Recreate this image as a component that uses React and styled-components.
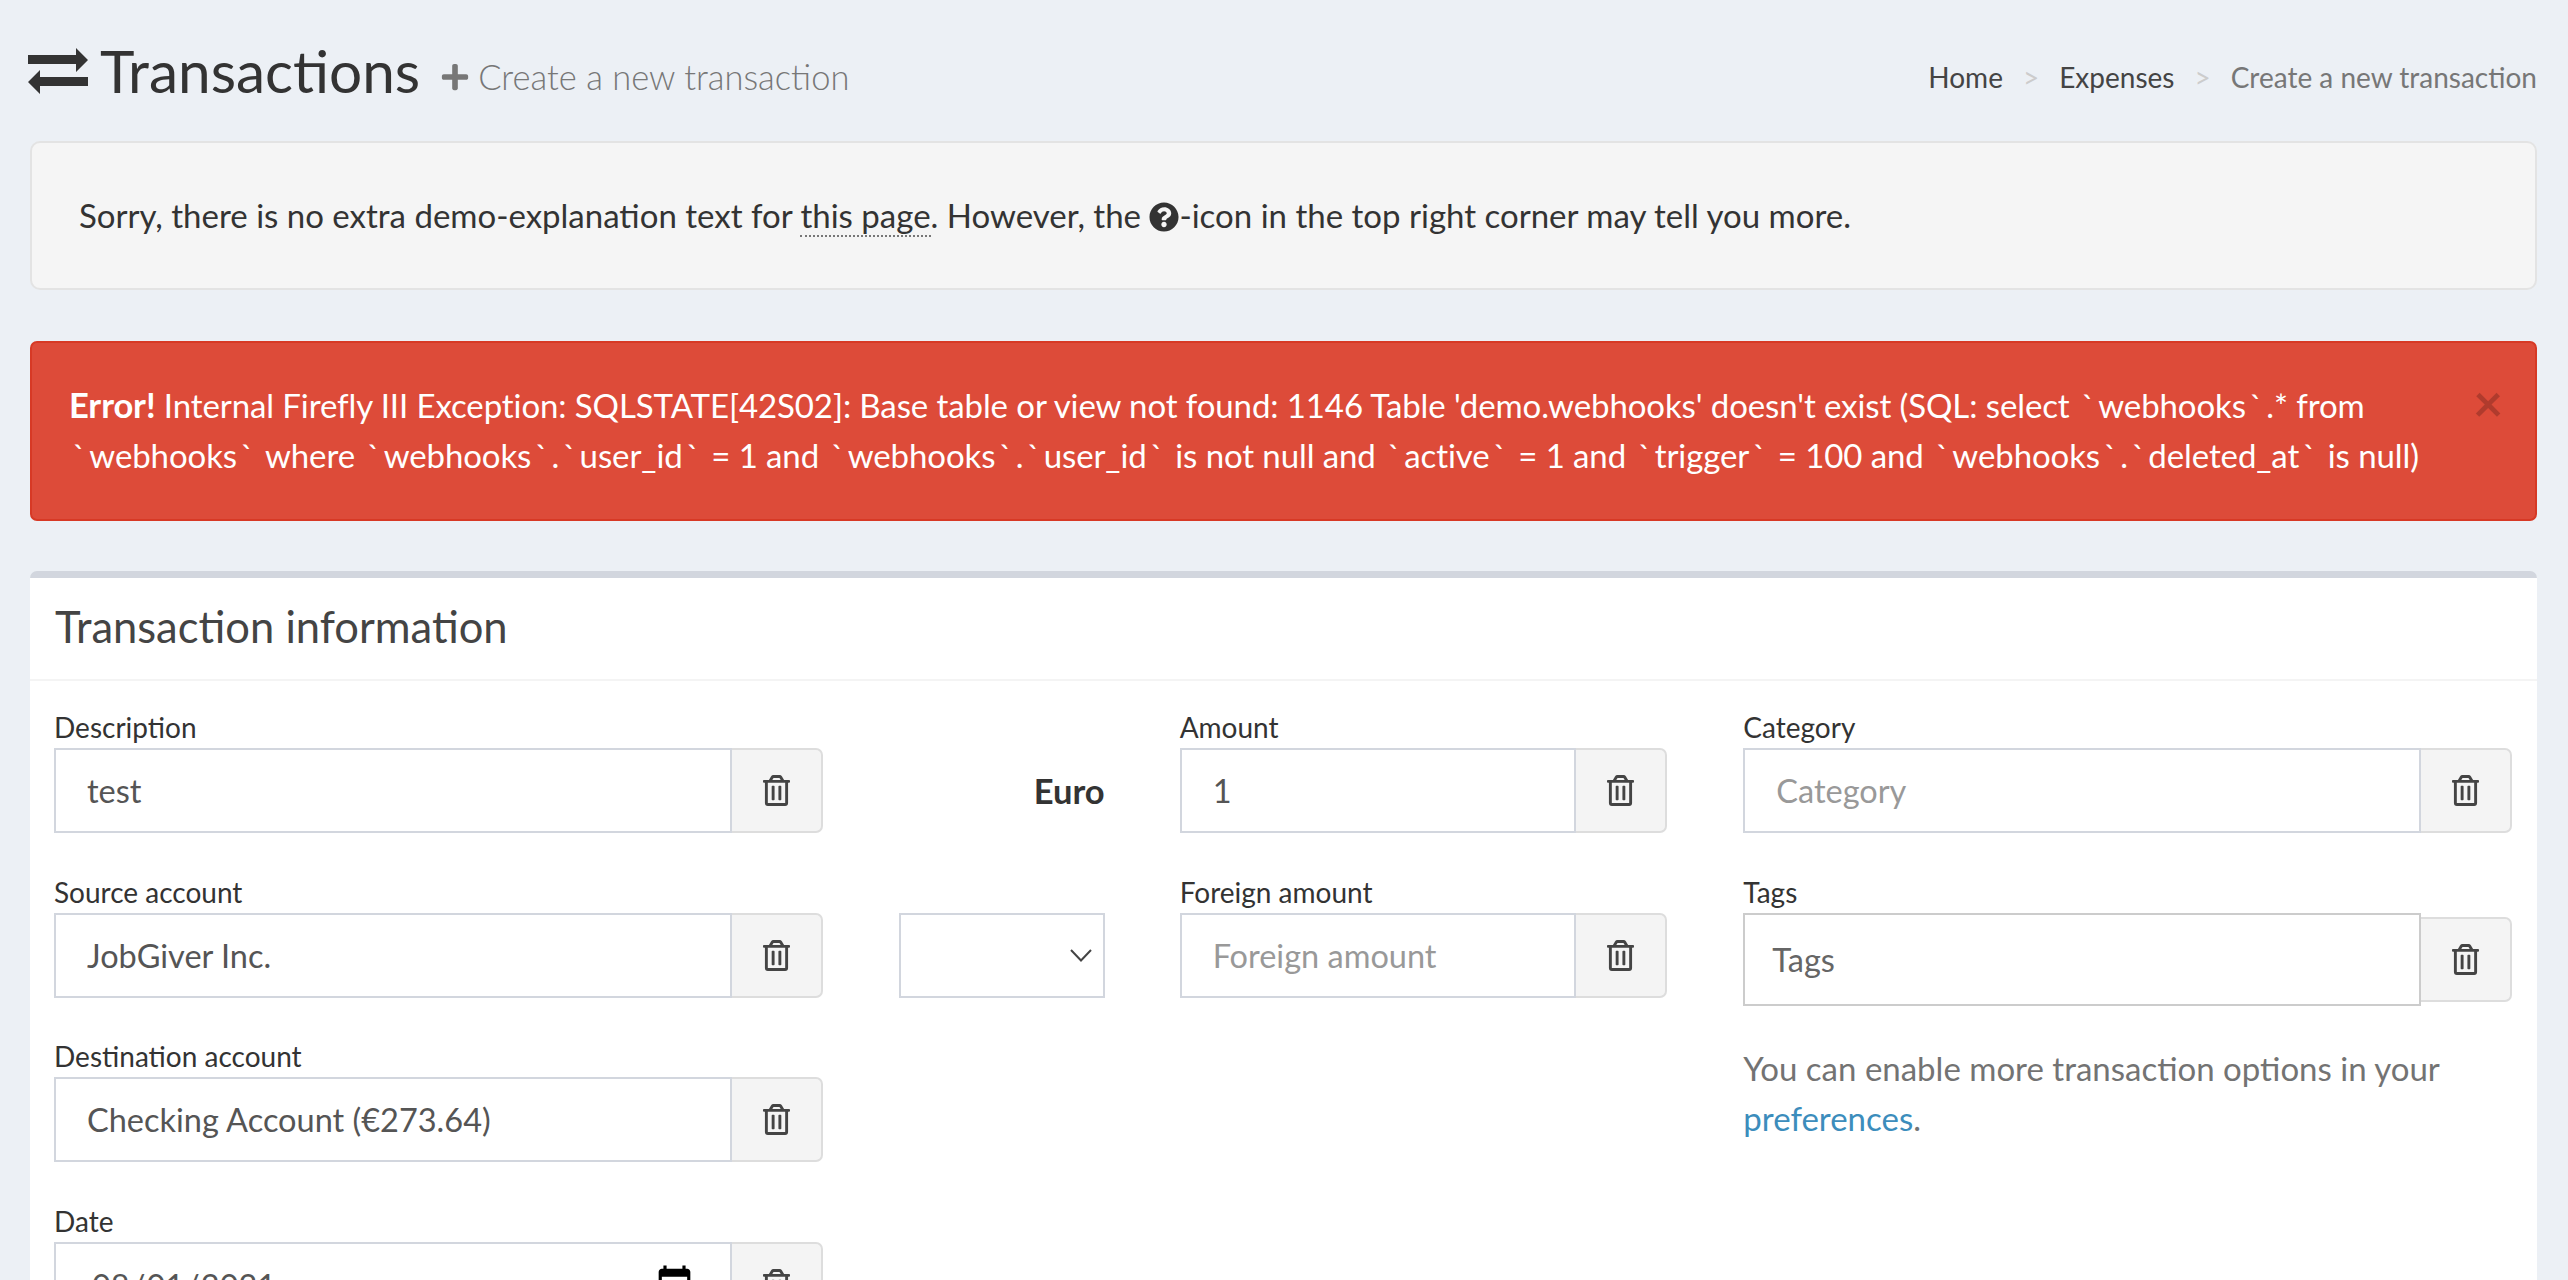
import React from 'react';
import styled, { createGlobalStyle } from 'styled-components';
import { FaPlus, FaQuestionCircle, FaRegTrashAlt } from 'react-icons/fa';

const GlobalStyle = createGlobalStyle`
html, body {
    margin: 0;
    height: 1280px;
    overflow: hidden;
    background: #ecf0f5;
}
body {
    font-family: "Lato", "Open Sans", sans-serif;
    font-size: 33px;
    line-height: 50px;
    color: #333;
}
`;

const Page = styled.div`
padding: 0 31px 0 30px;
`;

const Header = styled.header`
display: flex;
justify-content: space-between;
height: 141px;
padding-top: 35px;
box-sizing: border-box;
`;

const Title = styled.h1`
display: flex;
align-items: center;
margin: 0;
height: 70px;
font-size: 58.5px;
font-weight: 400;
line-height: 70px;
`;

const TitleIcon = styled.svg`
width: 60px;
height: 46px;
margin: 2px 12px 0 -2px;
fill: #333;
`;

const SubTitle = styled.small`
display: flex;
align-items: center;
margin: 14px 0 0 20px;
font-size: 34.5px;
font-weight: 300;
color: #777;
`;

const PlusIcon = styled(FaPlus)`
width: 30px;
height: 30px;
margin-right: 8px;
color: #777;
`;

const Breadcrumb = styled.nav`
display: flex;
gap: 20px;
padding-top: 21px;
font-size: 28px;
line-height: 42px;
`;

const Crumb = styled.span`
color: ${(props) => (props.$active ? '#777' : '#444')};
`;

const CrumbSep = styled.span`
color: #ccc;
`;

const Well = styled.div`
box-sizing: border-box;
height: 149px;
padding: 0 47px 2px;
display: flex;
align-items: center;
background: #f5f5f5;
border: 2px solid #e3e3e3;
border-radius: 10px;
`;

const Dotted = styled.span`
border-bottom: 2px dotted #777;
line-height: 38px;
`;

const HelpIcon = styled(FaQuestionCircle)`
width: 30px;
height: 30px;
vertical-align: -4px;
`;

const Alert = styled.div`
box-sizing: border-box;
display: flex;
justify-content: space-between;
height: 180px;
margin-top: 51px;
padding: 37px 32px 0 37px;
background: #dd4b39;
border: 2px solid #d73925;
border-radius: 7px;
color: #fff;
font-size: 33px;
letter-spacing: -0.1px;
`;

const AlertLead = styled.strong`
font-size: 34.5px;
`;

const Tick = styled.span`
padding: 0 3.6px;
`;

const CloseMark = styled.span`
font-size: 52px;
font-weight: 700;
line-height: 44px;
color: #000;
opacity: 0.2;
`;

const Box = styled.section`
margin-top: 50px;
background: #fff;
border-top: 7px solid #d2d6de;
border-radius: 7px 7px 0 0;
height: 800px;
`;

const BoxHeader = styled.div`
box-sizing: border-box;
height: 103px;
padding: 0 25px 6px;
display: flex;
align-items: center;
border-bottom: 2px solid #f4f4f4;
font-size: 43.5px;
color: #444;
`;

const FormGrid = styled.div`
display: grid;
grid-template-columns: repeat(3, minmax(0, 1fr));
column-gap: 76px;
padding: 25px 25px 0 24px;
`;

const Column = styled.div`
display: flex;
flex-direction: column;
`;

const AmountGrid = styled.div`
display: grid;
grid-template-columns: 206px minmax(0, 1fr);
grid-auto-rows: 164.5px;
column-gap: 75px;
`;

const Field = styled.div`
height: 164.5px;
`;

const Label = styled.label`
display: block;
height: 42px;
padding-top: 1px;
box-sizing: border-box;
font-size: 28px;
line-height: 40px;
color: #333;
`;

const InputGroup = styled.div`
display: flex;
align-items: center;
`;

const TextInput = styled.input`
box-sizing: border-box;
flex: 1;
min-width: 0;
height: ${(props) => (props.$tall ? '93px' : '85px')};
padding: 0 ${(props) => (props.$tall ? '27px' : '31px')};
border: 2px solid ${(props) => (props.$tall ? '#ccc' : '#d2d6de')};
border-radius: 0;
outline: none;
font: inherit;
font-size: 32.5px;
color: #555;
background: #fff;
&::placeholder {
    color: ${(props) => (props.$tall ? '#666' : '#999')};
    opacity: 1;
}
&::-webkit-datetime-edit {
    padding: 3px 0 0 4px;
}
&::-webkit-calendar-picker-indicator {
    width: 41px;
    height: 41px;
    margin-right: 4px;
    padding: 0;
}
`;

const TrashButton = styled.button`
box-sizing: border-box;
flex: none;
width: 91px;
height: 85px;
padding: 0;
display: flex;
align-items: center;
justify-content: center;
background: #f4f4f4;
border: 2px solid #ddd;
border-left-width: 0;
border-radius: 0 7px 7px 0;
color: #444;
`;

const TrashIcon = styled(FaRegTrashAlt)`
width: 27px;
height: 31px;
`;

const CurrencyCode = styled.div`
height: 85px;
margin-top: 42px;
display: flex;
align-items: center;
justify-content: flex-end;
font-size: 34.5px;
font-weight: 700;
`;

const SelectWrap = styled.div`
position: relative;
width: 206px;
height: 85px;
margin-top: 42px;
`;

const CurrencySelect = styled.select`
box-sizing: border-box;
display: block;
width: 100%;
height: 100%;
appearance: none;
border: 2px solid #d2d6de;
border-radius: 0;
background: #fff;
font: inherit;
`;

const SelectArrow = styled.svg`
position: absolute;
top: 36px;
right: 13px;
width: 22px;
height: 13px;
fill: none;
stroke: #444;
stroke-width: 2;
pointer-events: none;
`;

const HelpText = styled.p`
margin: 8px 0 0;
color: #737373;
`;

const PrefLink = styled.span`
color: #3c8dbc;
`;

// backticks are narrow in this font, give them some room so the line lengths hold
const withTicks = (text) =>
    text.split('`').map((part, i, parts) => (
        <React.Fragment key={i}>
            {part}
            {i < parts.length - 1 && <Tick>`</Tick>}
        </React.Fragment>
    ));

// one row of the form: label, input and the clear button beside it
const InputField = ({ label, value, placeholder, type, tall }) => (
    <Field>
        <Label>{label}</Label>
        <InputGroup>
            <TextInput type={type || 'text'} defaultValue={value} placeholder={placeholder} $tall={tall} />
            <TrashButton type="button"><TrashIcon /></TrashButton>
        </InputGroup>
    </Field>
);

const App = () => (
    <Page>
        <GlobalStyle />
        <Header>
            <Title>
                <TitleIcon viewBox="0 0 60 46">
                    <path d="M0 7h48V0l12 12-12 12v-8H0z" />
                    <path d="M60 29H12v-7L0 34l12 12v-8h48z" />
                </TitleIcon>
                Transactions
                <SubTitle><PlusIcon />Create a new transaction</SubTitle>
            </Title>
            <Breadcrumb>
                <Crumb>Home</Crumb>
                <CrumbSep>&gt;</CrumbSep>
                <Crumb>Expenses</Crumb>
                <CrumbSep>&gt;</CrumbSep>
                <Crumb $active>Create a new transaction</Crumb>
            </Breadcrumb>
        </Header>

        <Well>
            <span>
                Sorry, there is no extra demo-explanation text for <Dotted>this page</Dotted>. However, the <HelpIcon />-icon in the top right corner may tell you more.
            </span>
        </Well>

        <Alert>
            <div>
                <AlertLead>Error!</AlertLead> Internal Firefly III Exception: SQLSTATE[42S02]: Base table or view not found: 1146 Table 'demo.webhooks' doesn't exist (SQL: select {withTicks('`webhooks`.* from')}<br />
                {withTicks('`webhooks` where `webhooks`.`user_id` = 1 and `webhooks`.`user_id` is not null and `active` = 1 and `trigger` = 100 and `webhooks`.`deleted_at` is null)')}
            </div>
            <CloseMark>×</CloseMark>
        </Alert>

        <Box>
            <BoxHeader>Transaction information</BoxHeader>
            <FormGrid>
                <Column>
                    <InputField label="Description" value="test" />
                    <InputField label="Source account" value="JobGiver Inc." />
                    <InputField label="Destination account" value="Checking Account (€273.64)" />
                    <InputField label="Date" type="date" value="2021-08-01" />
                </Column>
                <AmountGrid>
                    <CurrencyCode>Euro</CurrencyCode>
                    <InputField label="Amount" value="1" />
                    <SelectWrap>
                        <CurrencySelect />
                        <SelectArrow viewBox="0 0 22 13"><path d="M1 1l10 10.5L21 1" /></SelectArrow>
                    </SelectWrap>
                    <InputField label="Foreign amount" placeholder="Foreign amount" />
                </AmountGrid>
                <Column>
                    <InputField label="Category" placeholder="Category" />
                    <InputField label="Tags" placeholder="Tags" tall />
                    <HelpText>You can enable more transaction options in your<br /><PrefLink>preferences</PrefLink>.</HelpText>
                </Column>
            </FormGrid>
        </Box>
    </Page>
);

export default App;
